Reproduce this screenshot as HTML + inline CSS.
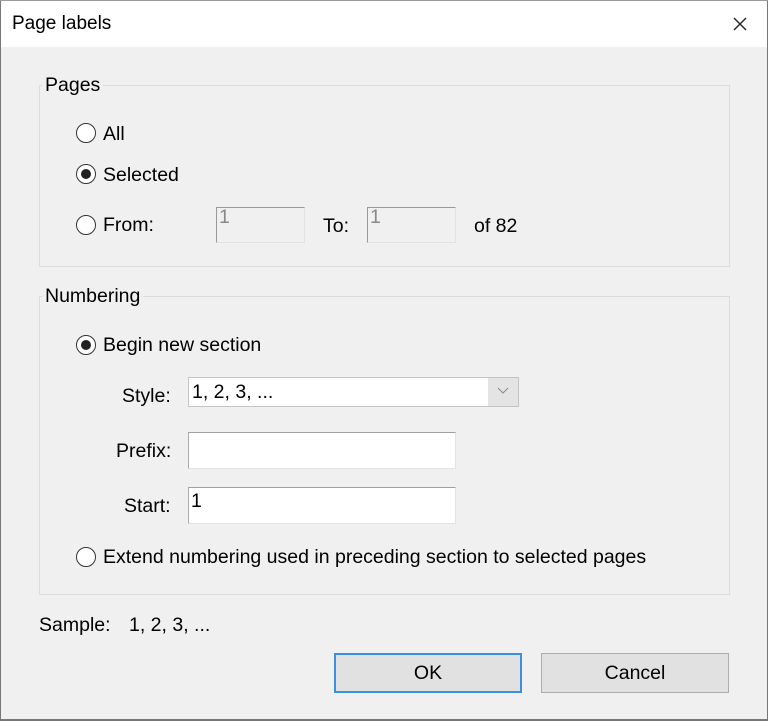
<!DOCTYPE html><html><head><style>
body{margin:0;width:768px;height:721px;overflow:hidden;font-family:"Liberation Sans",sans-serif;background:#f0f0f0;position:relative;color:#000}
.a{position:absolute}
.t{font-size:19.5px;line-height:22px}
.rad{position:absolute;width:20px;height:20px;border:1px solid #333;border-radius:50%;background:#fff;box-sizing:border-box}
.rad.on::after{content:"";position:absolute;left:4px;top:4px;width:10px;height:10px;border-radius:50%;background:#222}
.grp{position:absolute;border:1px solid #dcdcdc}
.lab{position:absolute;background:#f0f0f0;padding:0 3px;font-size:19.5px;line-height:22px}
.box{position:absolute;background:#fff;border:1px solid #ababab;border-top-color:#a0a0a0;border-right-color:#e3e3e3;border-bottom-color:#e3e3e3;box-sizing:border-box;font-size:19.5px;line-height:22px;padding-left:2px}
.dis{background:#f0f0f0;color:#888;border-top-color:#999;border-left-color:#999}
.btn{position:absolute;background:#e1e1e1;border:1px solid #adadad;box-sizing:border-box;font-size:19.5px;text-align:center;line-height:37px}
</style></head><body>
<div class="a" style="left:0;top:0;width:768px;height:47px;background:#fff"></div>
<div class="a" style="left:0;top:0;width:1px;height:721px;background:#777"></div>
<div class="a" style="right:0;top:0;width:1px;height:721px;background:#777"></div>
<div class="a" style="left:0;bottom:0;width:768px;height:2px;background:#777"></div>
<div class="a" style="left:0;top:0;width:768px;height:1px;background:#999"></div>
<div class="a t" style="left:12px;top:13px;font-size:19px">Page labels</div>
<svg class="a" style="left:732px;top:16px" width="16" height="16"><path d="M2 2L14 14M14 2L2 14" stroke="#222" stroke-width="1.4"/></svg>

<div class="grp" style="left:39px;top:85px;width:689px;height:180px"></div>
<div class="lab" style="left:42px;top:74px">Pages</div>
<div class="rad" style="left:76px;top:123px"></div><div class="a t" style="left:103px;top:123px">All</div>
<div class="rad on" style="left:76px;top:164px"></div><div class="a t" style="left:103px;top:164px">Selected</div>
<div class="rad" style="left:76px;top:215px"></div><div class="a t" style="left:103px;top:214px">From:</div>
<div class="box dis" style="left:216px;top:207px;width:89px;height:36px;line-height:18px">1</div>
<div class="a t" style="left:323px;top:215px">To:</div>
<div class="box dis" style="left:367px;top:207px;width:89px;height:36px;line-height:18px">1</div>
<div class="a t" style="left:474px;top:215px">of 82</div>

<div class="grp" style="left:39px;top:296px;width:689px;height:297px"></div>
<div class="lab" style="left:42px;top:285px">Numbering</div>
<div class="rad on" style="left:76px;top:335px"></div><div class="a t" style="left:103px;top:334px">Begin new section</div>
<div class="a t" style="left:122px;top:385px">Style:</div>
<div class="box" style="left:188px;top:377px;width:331px;height:30px;border:1px solid #c4c4c4;line-height:28px;padding-left:3px">1, 2, 3, ...</div>
<div class="a" style="left:488px;top:378px;width:30px;height:28px;background:#e4e4e4"></div>
<svg class="a" style="left:497px;top:387px" width="12" height="8"><path d="M1 1L6 6L11 1" stroke="#888" fill="none"/></svg>
<div class="a t" style="left:116px;top:440px">Prefix:</div>
<div class="box" style="left:188px;top:432px;width:268px;height:37px"></div>
<div class="a t" style="left:124px;top:495px">Start:</div>
<div class="box" style="left:188px;top:487px;width:268px;height:37px;padding-top:2px">1</div>
<div class="rad" style="left:76px;top:547px"></div><div class="a t" style="left:103px;top:546px">Extend numbering used in preceding section to selected pages</div>

<div class="a t" style="left:39px;top:614px">Sample:</div>
<div class="a t" style="left:129px;top:614px">1, 2, 3, ...</div>
<div class="btn" style="left:334px;top:653px;width:188px;height:40px;border:2px solid #3b8fe0">OK</div>
<div class="btn" style="left:541px;top:653px;width:188px;height:40px;line-height:39px">Cancel</div>
</body></html>
